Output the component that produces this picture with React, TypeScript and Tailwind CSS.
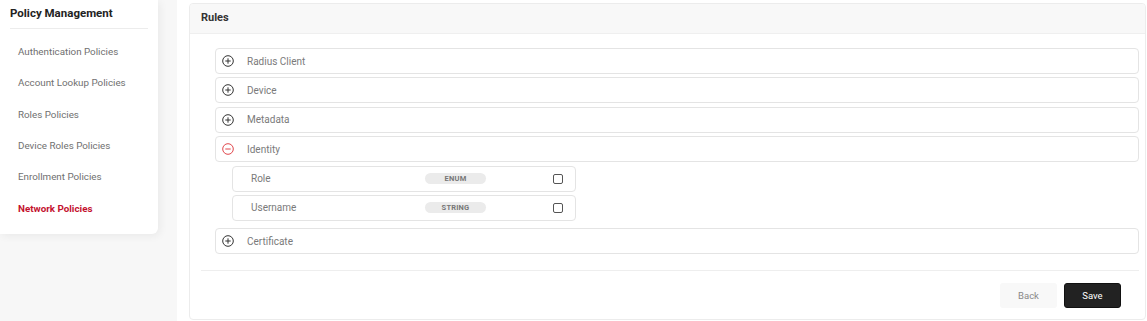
import React from 'react'

const menu = [
    'Authentication Policies',
    'Account Lookup Policies',
    'Roles Policies',
    'Device Roles Policies',
    'Enrollment Policies',
    'Network Policies',
]

const PlusCircle = ({ minus = false }: { minus?: boolean }) => (
    <svg width="12" height="12" viewBox="0 0 12 12" fill="none" stroke={minus ? '#e0474c' : '#333'} strokeWidth="1">
        <circle cx="6" cy="6" r="5.3" />
        <line x1="3.3" y1="6" x2="8.7" y2="6" />
        {!minus && <line x1="6" y1="3.3" x2="6" y2="8.7" />}
    </svg>
)

const RuleRow = ({ label, open = false }: { label: string; open?: boolean }) => (
    <div className="h-[26px] flex items-center border border-[#e4e4e4] rounded-[4px] bg-white pl-[6px]">
        <PlusCircle minus={open} />
        <span className="ml-[13px] text-[10px] text-[#7a7a7a]">{label}</span>
    </div>
)

const FieldRow = ({ label, type }: { label: string; type: string }) => (
    <div className="h-[26px] w-[344px] flex items-center border border-[#e4e4e4] rounded-[4px] bg-white">
        <span className="ml-[18px] w-[174px] text-[10px] text-[#7a7a7a]">{label}</span>
        <span className="w-[61px] h-[11px] rounded-full bg-[#ebebeb] flex items-center justify-center text-[7.5px] font-bold text-[#777] tracking-wide">{type}</span>
        <span className="ml-auto mr-[12px] w-[10px] h-[10px] rounded-[2px] border border-[#555] bg-white" />
    </div>
)

const App = () => {
    return (
        <div className="flex w-[1147px] h-[321px] overflow-hidden font-['Roboto',sans-serif]">
            {/* sidebar */}
            <div className="w-[177px] shrink-0 bg-[#f7f7f7]">
                <div className="w-[158px] bg-white rounded-br-[6px] shadow-[2px_2px_8px_rgba(0,0,0,0.06)] pb-[9px]">
                    <div className="mx-[10px] h-[29px] flex items-center border-b border-[#ececec] text-[11.5px] font-bold text-[#222]">
                        Policy Management
                    </div>
                    <div className="pt-[7.5px]">
                        {menu.map((item) => (
                            <div
                                key={item}
                                className={`h-[31.4px] flex items-center pl-[18px] text-[9.8px] ${item === 'Network Policies' ? 'font-bold text-[#c4122f]' : 'text-[#707070]'}`}
                            >
                                {item}
                            </div>
                        ))}
                    </div>
                </div>
            </div>

            {/* main */}
            <div className="flex-1 bg-white pl-[12px] pt-[3px] pr-[1px]">
                <div className="h-[317px] border border-[#ececec] rounded-[4px] flex flex-col">
                    <div className="h-[30px] shrink-0 bg-[#f8f8f8] border-b border-[#efefef] flex items-center px-[11px] text-[11px] font-bold text-[#333] rounded-t-[4px]">
                        Rules
                    </div>
                    <div className="pl-[11px] pr-[6px]">
                        <div className="ml-[14px] mt-[14px] flex flex-col gap-[3.4px]">
                            <RuleRow label="Radius Client" />
                            <RuleRow label="Device" />
                            <RuleRow label="Metadata" />
                            <RuleRow label="Identity" open />
                            <div className="ml-[17px] mb-[4px] flex flex-col gap-[3.4px]">
                                <FieldRow label="Role" type="ENUM" />
                                <FieldRow label="Username" type="STRING" />
                            </div>
                            <RuleRow label="Certificate" />
                        </div>
                        <div className="mt-[16px] border-t border-[#eeeeee]" />
                        <div className="flex justify-end gap-[7px] mt-[12px] mr-[18px]">
                            <button className="w-[57px] h-[25px] rounded-[3px] bg-[#f8f8f8] text-[9.5px] text-[#888]">Back</button>
                            <button className="w-[57px] h-[25px] rounded-[3px] bg-[#222] text-[9.5px] text-white border border-[#111]">Save</button>
                        </div>
                    </div>
                </div>
            </div>
        </div>
    )
}

export default App
